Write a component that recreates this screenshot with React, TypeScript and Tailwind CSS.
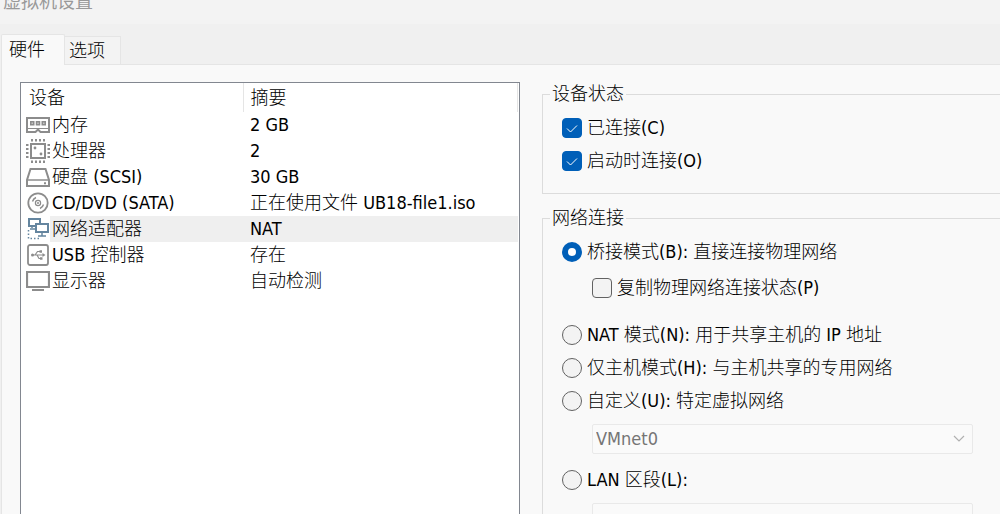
import React, { useState } from "react";

type Device = {
  id: string;
  name: string;
  summary: string;
  icon: React.ReactNode;
};

const MemoryIcon = () => (
  <svg width="24" height="24" viewBox="0 0 24 24" fill="none" stroke="#8c8c8c" strokeWidth="2">
    <path d="M1 5h22v14h-8.500l-2-2h-1l-2 2H1z" />
    <path d="M2 15.500h20" strokeWidth="1" />
    <path d="M4.750 8.750h3v3h-3zM10.500 8.750h3v3h-3zM16.250 8.750h3v3h-3z" strokeWidth="1.500" fill="#c4c4c4" />
  </svg>
);

const CpuIcon = () => (
  <svg width="24" height="24" viewBox="0 0 24 24" fill="none" stroke="#8c8c8c" strokeWidth="2">
    <path d="M5 5h14v14H5z" />
    <path d="M5 1.250h14M5 22.750h14M1.250 5v14M22.750 5v14" strokeWidth="2.500" strokeDasharray="2 2" />
    <circle cx="9" cy="9" r="1.400" fill="#8c8c8c" stroke="none" />
    <circle cx="15" cy="15" r="1.400" fill="#8c8c8c" stroke="none" />
  </svg>
);

const DiskIcon = () => (
  <svg width="24" height="24" viewBox="0 0 24 24" fill="none" stroke="#8c8c8c" strokeWidth="2">
    <path d="M4.500 4h15L23 15v6H1v-6z" />
    <path d="M1 15h22" strokeWidth="1.500" />
    <path d="M18 18.200h2" />
  </svg>
);

const DiscIcon = () => (
  <svg width="24" height="24" viewBox="0 0 24 24" fill="none" stroke="#8c8c8c" strokeWidth="1.8">
    <circle cx="12" cy="12" r="9.700" />
    <circle cx="12" cy="12" r="2.600" strokeWidth="1.200" />
    <circle cx="12" cy="12" r="1" fill="#8c8c8c" stroke="none" />
    <path d="M6.500 10.500a6 6 0 0 1 3.500-4M17.500 13.500a6 6 0 0 1-3.500 4" strokeWidth="1.400" />
  </svg>
);

const NetworkIcon = () => (
  <svg width="24" height="24" viewBox="0 0 24 24" fill="none" stroke="#64859f" strokeWidth="2">
    <path d="M9 9H3V2h11v4" />
    <path d="M10 7h12v8H10z" />
    <path d="M16 15v4M12 19h8M6 9v2M4 12h5" strokeWidth="1.500" />
    <path d="M2.500 13v8.500H14" strokeWidth="1.500" strokeDasharray="1.500 2" />
  </svg>
);

const UsbIcon = () => (
  <svg width="24" height="24" viewBox="0 0 24 24" fill="none" stroke="#8c8c8c" strokeWidth="1.8">
    <rect x="2" y="2" width="20" height="20" rx="2" />
    <path d="M6 12h12M9 12l2.500-3.500H14M11 12l2 3.500h2" strokeWidth="1.200" />
    <circle cx="6.500" cy="12" r="1.500" fill="#8c8c8c" stroke="none" />
    <path d="M16.500 10l3 2-3 2zM13.500 7.250h2.500v2.500h-2.500zM14 14.250h2.500v2.500H14z" fill="#8c8c8c" stroke="none" />
  </svg>
);

const DisplayIcon = () => (
  <svg width="24" height="24" viewBox="0 0 24 24" fill="none" stroke="#8c8c8c" strokeWidth="2">
    <path d="M1 3h22v15H1z" strokeWidth="2.200" />
    <path d="M6 21h12" />
  </svg>
);

const devices: Device[] = [
  { id: "memory", name: "内存", summary: "2 GB", icon: <MemoryIcon /> },
  { id: "cpu", name: "处理器", summary: "2", icon: <CpuIcon /> },
  { id: "disk", name: "硬盘 (SCSI)", summary: "30 GB", icon: <DiskIcon /> },
  { id: "cd", name: "CD/DVD (SATA)", summary: "正在使用文件 UB18-file1.iso", icon: <DiscIcon /> },
  { id: "network", name: "网络适配器", summary: "NAT", icon: <NetworkIcon /> },
  { id: "usb", name: "USB 控制器", summary: "存在", icon: <UsbIcon /> },
  { id: "display", name: "显示器", summary: "自动检测", icon: <DisplayIcon /> },
];

type CheckProps = {
  label: string;
  checked: boolean;
  onChange: (value: boolean) => void;
};

const Check = ({ label, checked, onChange }: CheckProps) => (
  <label className="flex h-[33px] items-center gap-[5px]">
    <span className="grid size-5 shrink-0">
      <input
        type="checkbox"
        checked={checked}
        onChange={(e) => onChange(e.target.checked)}
        className="col-start-1 row-start-1 size-5 appearance-none rounded-sm border border-[#626262] bg-[#f3f3f3] checked:border-[#005fb8] checked:bg-[#005fb8]"
      />
      {checked && (
        <svg
          className="pointer-events-none col-start-1 row-start-1"
          width="20"
          height="20"
          viewBox="0 0 20 20"
          fill="none"
          stroke="white"
        >
          <path d="M5 10.500l3.500 3.500L15 7.500" />
        </svg>
      )}
    </span>
    <span className="whitespace-nowrap">{label}</span>
  </label>
);

type ModeProps = {
  label: string;
  value: string;
  mode: string;
  onSelect: (value: string) => void;
};

const Mode = ({ label, value, mode, onSelect }: ModeProps) => (
  <label className="flex h-[33px] items-center gap-[5px]">
    <input
      type="radio"
      name="mode"
      value={value}
      checked={mode === value}
      onChange={() => onSelect(value)}
      className="size-5 shrink-0 appearance-none rounded-full border border-[#626262] bg-[#f3f3f3] checked:border-[6px] checked:border-[#005fb8] checked:bg-white"
    />
    <span className="whitespace-nowrap">{label}</span>
  </label>
);

type DropDownProps = {
  label: string;
  options: string[];
};

const DropDown = ({ label, options }: DropDownProps) => (
  <div className="mt-[7px] mr-[27px] ml-[30px] grid items-center">
    <select
      aria-label={label}
      disabled
      className="col-start-1 row-start-1 h-[30px] w-full appearance-none rounded-xs border border-[#e9e9e9] bg-[#fafafa] px-[3px] text-[#757575] opacity-100"
    >
      {options.map((option) => (
        <option key={option}>{option}</option>
      ))}
    </select>
    {options.length > 0 && (
      <svg
        className="pointer-events-none col-start-1 row-start-1 mr-2 justify-self-end"
        width="12"
        height="8"
        viewBox="0 0 12 8"
        fill="none"
        stroke="#b0b0b0"
        strokeWidth="1.2"
      >
        <path d="M1 1l5 5 5-5" />
      </svg>
    )}
  </div>
);

const App = () => {
  const [selected, setSelected] = useState("network");
  const [connected, setConnected] = useState(true);
  const [connectOnStart, setConnectOnStart] = useState(true);
  const [replicate, setReplicate] = useState(false);
  const [mode, setMode] = useState("bridged");

  return (
    <div className="flex h-screen flex-col overflow-hidden bg-[#f0f0f0] font-['DejaVu_Sans_Condensed','Noto_Sans_CJK_SC',sans-serif] text-lg leading-6 font-light text-black">
      <header className="-mt-3 flex h-9 shrink-0 items-start bg-[#f3f3f3] px-[3px]">
        <h1 className="pt-[2px] font-normal text-[#999999]">虚拟机设置</h1>
      </header>

      <div role="tablist" className="mt-[10px] ml-px flex shrink-0 items-end">
        <button
          role="tab"
          aria-selected="true"
          className="z-10 -mb-px h-[31px] rounded-t-xs border border-b-0 border-[#e5e5e5] bg-[#f9f9f9] pr-[19px] pl-[7px]"
        >
          硬件
        </button>
        <button
          role="tab"
          aria-selected="false"
          className="-ml-px h-7 border border-b-0 border-[#e5e5e5] bg-[#f3f3f3] pr-[15px] pl-1"
        >
          选项
        </button>
      </div>

      <main className="ml-px flex min-h-0 flex-1 gap-[22px] border-t border-l border-[#e5e5e5] bg-[#f9f9f9] pt-[17px] pl-[18px]">
        <div className="w-[500px] shrink-0 border border-b-0 border-[#828790] bg-white pr-px">
          <table className="w-full table-fixed border-collapse text-left">
            <colgroup>
              <col className="w-[29px]" />
              <col className="w-[193px]" />
              <col />
            </colgroup>
            <thead>
              <tr className="h-[29px]">
                <th colSpan={2} className="p-0 pl-2 font-light">
                  设备
                </th>
                <th className="border-x border-[#e5e5e5] p-0 pl-[7px] font-light">摘要</th>
              </tr>
            </thead>
            <tbody>
              {devices.map((device) => {
                const bg = device.id === selected ? "bg-[#efefef]" : "";
                return (
                  <tr key={device.id} className="h-[26px]" onClick={() => setSelected(device.id)}>
                    <td className="p-0 pl-[5px]">{device.icon}</td>
                    <td className={`${bg} p-0 pl-[2px] whitespace-nowrap`}>{device.name}</td>
                    <td className={`${bg} p-0 pl-[7px] whitespace-nowrap`}>{device.summary}</td>
                  </tr>
                );
              })}
            </tbody>
          </table>
        </div>

        <div className="min-w-0 flex-1">
          <fieldset className="border border-r-0 border-[#dcdcdc] pt-[5px] pb-4 pl-[19px]">
            <legend className="-ml-3 px-[2px]">设备状态</legend>
            <Check label="已连接(C)" checked={connected} onChange={setConnected} />
            <Check label="启动时连接(O)" checked={connectOnStart} onChange={setConnectOnStart} />
          </fieldset>

          <fieldset className="mt-3 border border-r-0 border-[#dcdcdc] pt-[5px] pb-4 pl-[19px]">
            <legend className="-ml-3 px-[2px]">网络连接</legend>
            <Mode label="桥接模式(B): 直接连接物理网络" value="bridged" mode={mode} onSelect={setMode} />
            <div className="mt-[3px] mb-[14px] ml-[30px]">
              <Check label="复制物理网络连接状态(P)" checked={replicate} onChange={setReplicate} />
            </div>
            <Mode label="NAT 模式(N): 用于共享主机的 IP 地址" value="nat" mode={mode} onSelect={setMode} />
            <Mode label="仅主机模式(H): 与主机共享的专用网络" value="host" mode={mode} onSelect={setMode} />
            <Mode label="自定义(U): 特定虚拟网络" value="custom" mode={mode} onSelect={setMode} />
            <DropDown label="VMnet" options={["VMnet0"]} />
            <div className="mt-[9px]">
              <Mode label="LAN 区段(L):" value="lan" mode={mode} onSelect={setMode} />
            </div>
            <DropDown label="LAN" options={[]} />
          </fieldset>
        </div>
      </main>
    </div>
  );
};

export default App;
